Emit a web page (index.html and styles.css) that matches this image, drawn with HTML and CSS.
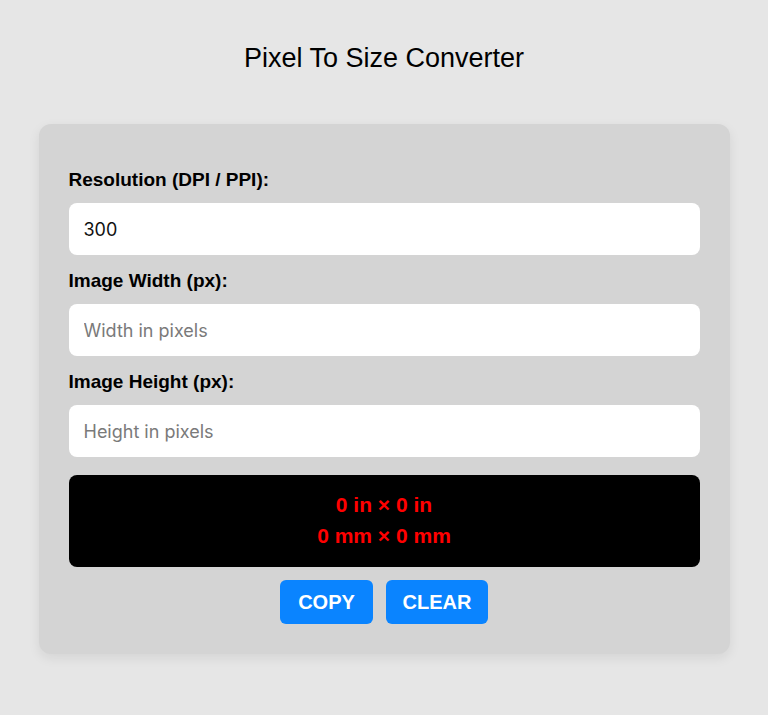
FILE: index.html
```html
<!DOCTYPE html>
<html lang="en">
<head>
<meta charset="utf-8">
<title>Pixel To Size Converter</title>
<link rel="stylesheet" href="styles.css">
</head>
<body>
  <h1 class="title">Pixel To Size Converter</h1>
  <main class="card">
    <div class="field">
      <label class="label" for="dpi">Resolution (DPI / PPI):</label>
      <input class="input" id="dpi" type="text" value="300">
    </div>
    <div class="field">
      <label class="label" for="w">Image Width (px):</label>
      <input class="input" id="w" type="text" placeholder="Width in pixels">
    </div>
    <div class="field field-last">
      <label class="label" for="h">Image Height (px):</label>
      <input class="input" id="h" type="text" placeholder="Height in pixels">
    </div>
    <div class="result">
      <div>0 in × 0 in</div>
      <div>0 mm × 0 mm</div>
    </div>
    <div class="actions">
      <button class="btn btn-copy">COPY</button>
      <button class="btn btn-clear">CLEAR</button>
    </div>
  </main>
</body>
</html>
```
FILE: styles.css
```css
html, body {
  margin: 0;
  padding: 0;
}
body {
  background: #e6e6e6;
  font-family: "Liberation Sans", Arial, sans-serif;
  color: #000;
  height: 715px;
  overflow: hidden;
}
.title {
  margin: 0;
  padding-top: 42px;
  height: 82px;
  box-sizing: border-box;
  text-align: center;
  font-size: 27px;
  font-weight: 400;
  line-height: 32px;
}
.card {
  margin: 0 auto;
  width: 691px;
  box-sizing: border-box;
  background: #d4d4d4;
  border-radius: 12px;
  padding: 45px 30px 30px;
  box-shadow: 0 4px 12px rgba(0,0,0,0.08);
  position: relative;
  top: 42px;
}
.field {
  display: flex;
  flex-direction: column;
  margin-bottom: 15px;
}
.field-last {
  margin-bottom: 18px;
}
.label {
  font-weight: 700;
  font-size: 19px;
  line-height: 22px;
  margin-bottom: 12px;
}
.input {
  height: 52px;
  box-sizing: border-box;
  border: none;
  border-radius: 8px;
  background: #fff;
  padding: 0 15px;
  font-family: Inter, "Noto Sans", sans-serif;
  font-size: 18px;
  color: #111;
  outline: none;
}
.input::placeholder {
  color: #7a7a7a;
}
.result {
  background: #000;
  border-radius: 8px;
  height: 92px;
  box-sizing: border-box;
  padding-top: 14px;
  text-align: center;
  color: #ff0000;
  font-family: "Liberation Sans", Arial, sans-serif;
  font-weight: 700;
  font-size: 21px;
  line-height: 31px;
}
.actions {
  display: flex;
  justify-content: center;
  gap: 13px;
  margin-top: 13px;
}
.btn {
  height: 44px;
  border: none;
  border-radius: 6px;
  background: #0a84ff;
  color: #fff;
  font-family: "Liberation Sans", Arial, sans-serif;
  font-weight: 700;
  font-size: 20px;
  padding: 0;
  cursor: pointer;
}
.btn-copy { width: 93px; }
.btn-clear { width: 102px; }
```
